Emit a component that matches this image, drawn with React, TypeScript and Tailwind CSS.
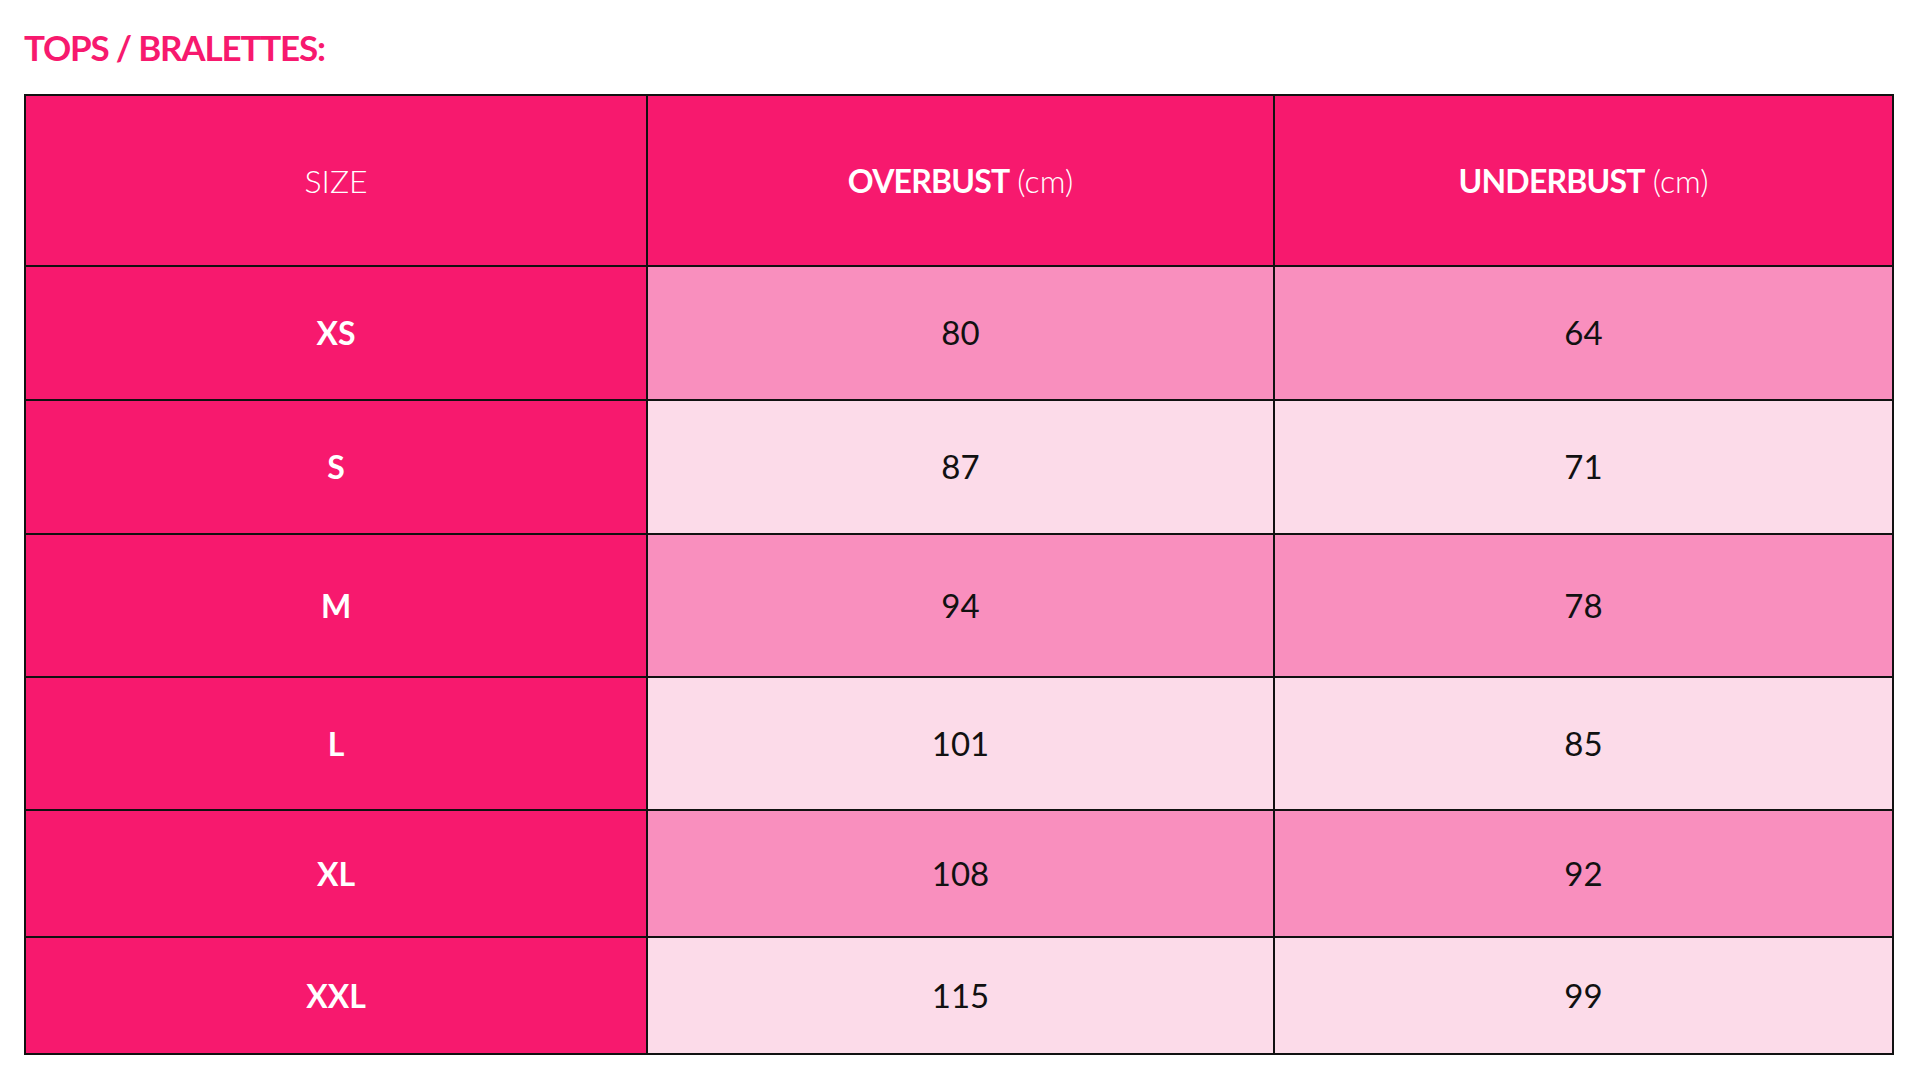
import React from "react";

const rows = [
  { size: "XS", over: "80", under: "64", h: "h-[132px]", bg: "bg-[#f98fbe]" },
  { size: "S", over: "87", under: "71", h: "h-[132px]", bg: "bg-[#fcdbe9]" },
  { size: "M", over: "94", under: "78", h: "h-[141px]", bg: "bg-[#f98fbe]" },
  { size: "L", over: "101", under: "85", h: "h-[131px]", bg: "bg-[#fcdbe9]" },
  { size: "XL", over: "108", under: "92", h: "h-[125px]", bg: "bg-[#f98fbe]" },
  { size: "XXL", over: "115", under: "99", h: "h-[115px]", bg: "bg-[#fcdbe9]" },
];

export default function App() {
  return (
    <div className="w-[1920px] h-[1080px] bg-white pl-[24px] font-['Lato',sans-serif]">
      <div className="h-[94px] flex items-center pt-[1px]">
        <h1 className="text-[35px] font-bold text-[#f7196e] leading-none tracking-[-1.2px]">
          TOPS / BRALETTES:
        </h1>
      </div>
      <div className="grid grid-cols-[620px_625px_617px] gap-[2px] bg-[#111] p-[2px] w-fit">
        <div className="h-[169px] bg-[#f7196e] flex items-center justify-center text-white text-[32px] font-light">
          SIZE
        </div>
        <div className="h-[169px] bg-[#f7196e] flex items-center justify-center text-white text-[32px]">
          <span className="font-bold tracking-[-0.8px]">OVERBUST</span>
          <span className="font-light ml-[8px]">(cm)</span>
        </div>
        <div className="h-[169px] bg-[#f7196e] flex items-center justify-center text-white text-[32px]">
          <span className="font-bold tracking-[-0.8px]">UNDERBUST</span>
          <span className="font-light ml-[8px]">(cm)</span>
        </div>
        {rows.map((r) => (
          <React.Fragment key={r.size}>
            <div className={`${r.h} bg-[#f7196e] flex items-center justify-center text-white text-[32px] font-bold`}>
              {r.size}
            </div>
            <div className={`${r.h} ${r.bg} flex items-center justify-center text-[#111] text-[33px]`}>
              {r.over}
            </div>
            <div className={`${r.h} ${r.bg} flex items-center justify-center text-[#111] text-[33px]`}>
              {r.under}
            </div>
          </React.Fragment>
        ))}
      </div>
    </div>
  );
}
